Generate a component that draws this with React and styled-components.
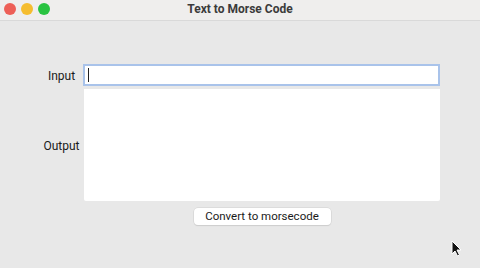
import React from 'react';
import styled, { createGlobalStyle } from 'styled-components';

const GlobalStyle = createGlobalStyle`
  html, body {
    margin: 0;
    padding: 0;
    background: #e8e8e8;
  }
  * {
    box-sizing: border-box;
  }
`;

const Window = styled.div`
  width: 480px;
  height: 268px;
  background: #e8e8e8;
  font-family: Roboto, "Liberation Sans", sans-serif;
  color: #1d1d1d;
  position: relative;
  overflow: hidden;
`;

const TitleBar = styled.div`
  height: 21px;
  background: #efeeed;
  border-bottom: 1px solid #d9d9d9;
  display: flex;
  align-items: flex-start;
`;

const Lights = styled.div`
  display: flex;
  gap: 5px;
  padding-left: 4px;
  padding-top: 3px;
`;

const Light = styled.span`
  width: 12px;
  height: 12px;
  border-radius: 50%;
  background: ${(p) => p.color};
`;

const Title = styled.div`
  flex: 1;
  text-align: center;
  font-size: 12px;
  font-weight: 700;
  color: #3b3b3b;
  margin-right: 50px;
  line-height: 19px;
`;

const Form = styled.div`
  display: grid;
  grid-template-columns: 45px 356px;
  grid-template-rows: 21px 112px 17px;
  row-gap: 4px;
  padding-left: 38px;
  padding-top: 43px;
`;

const Label = styled.div`
  font-size: 12px;
  display: flex;
  align-items: center;
  justify-content: center;
  color: #1a1a1a;
  padding-top: 2px;
  padding-left: 2px;
`;

const InputBox = styled.div`
  background: #fff;
  border: 1px solid #a9c3ea;
  box-shadow: 0 0 0 1px #a9c3ea;
  display: flex;
  align-items: center;
  padding-left: 3px;
  margin: 1px 0 0 1px;
`;

const Caret = styled.span`
  width: 1px;
  height: 14px;
  background: #222;
`;

const OutputBox = styled.div`
  background: #fff;
  border-radius: 0 0 2px 2px;
  margin-left: 1px;
  margin-right: -1px;
`;

const ButtonRow = styled.div`
  grid-column: 2;
  display: flex;
  justify-content: center;
  margin-top: 3px;
  padding-left: 2px;
`;

const Button = styled.button`
  width: 137px;
  height: 17px;
  background: #fff;
  border: none;
  border-radius: 4px;
  box-shadow: 0 0 0 0.5px #cfcfcf, 0 1px 1px rgba(0, 0, 0, 0.12);
  font-family: Roboto, "Liberation Sans", sans-serif;
  font-size: 11.5px;
  color: #1a1a1a;
  padding: 0;
  line-height: 17px;
`;

const Pointer = styled.svg`
  position: absolute;
  left: 451px;
  top: 240px;
`;

export default function App() {
  return (
    <>
      <GlobalStyle />
      <Window>
        <TitleBar>
          <Lights>
            <Light color="#ed5f57" />
            <Light color="#f5bd2f" />
            <Light color="#29c341" />
          </Lights>
          <Title>Text to Morse Code</Title>
        </TitleBar>
        <Form>
          <Label>Input</Label>
          <InputBox>
            <Caret />
          </InputBox>
          <Label>Output</Label>
          <OutputBox />
          <ButtonRow>
            <Button>Convert to morsecode</Button>
          </ButtonRow>
        </Form>
        <Pointer width="12" height="17" viewBox="0 0 12 17">
          <path d="M1 1 L1 14 L4 11 L6.5 16 L8.5 15 L6 10 L10 10 Z" fill="#111" stroke="#fff" strokeWidth="1" />
        </Pointer>
      </Window>
    </>
  );
}
